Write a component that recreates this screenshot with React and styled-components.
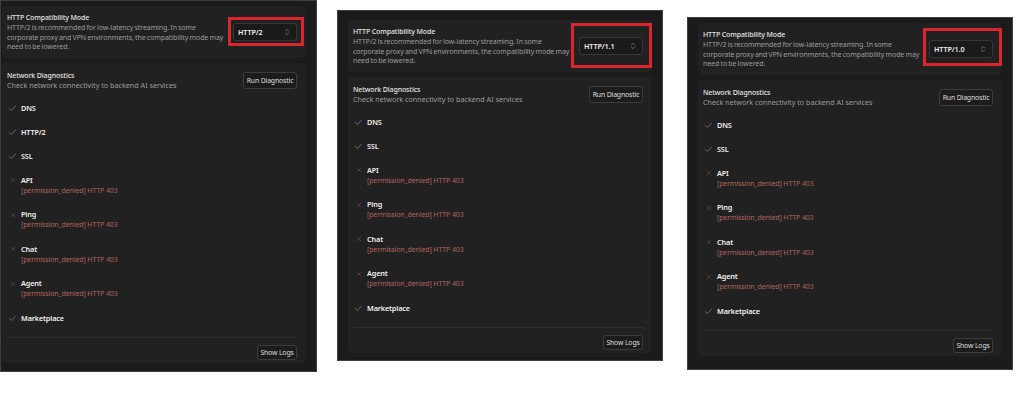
import styled, { createGlobalStyle } from "styled-components";
import { Check, X, ChevronsUpDown } from "lucide-react";

const GlobalStyle = createGlobalStyle`
  html, body {
    margin: 0;
    padding: 0;
    background: #ffffff;
  }
  body {
    font-family: "Noto Sans", "Open Sans", sans-serif;
    -webkit-font-smoothing: antialiased;
  }
`;

const ERR = "[permission_denied] HTTP 403";

const baseRows = [
  { name: "DNS", ok: true },
  { name: "SSL", ok: true },
  { name: "API", ok: false, err: ERR },
  { name: "Ping", ok: false, err: ERR },
  { name: "Chat", ok: false, err: ERR },
  { name: "Agent", ok: false, err: ERR },
  { name: "Marketplace", ok: true },
];

const withHttp2 = [baseRows[0], { name: "HTTP/2", ok: true }, ...baseRows.slice(1)];

const panels = [
  {
    value: "HTTP/2",
    rows: withHttp2,
    ml: 0,
    mt: 0,
    pl: 1,
    pt: 5,
    pb: 8,
    width: 317,
    mark: { t: 6, r: 7, b: 5, l: 5 },
  },
  {
    value: "HTTP/1.1",
    rows: baseRows,
    ml: 20,
    mt: 10,
    pl: 10,
    pt: 9,
    pb: 7,
    width: 326,
    mark: { t: 14, r: 9, b: 13, l: 8 },
  },
  {
    value: "HTTP/1.0",
    rows: baseRows,
    ml: 24,
    mt: 17,
    pl: 10,
    pt: 5,
    pb: 13,
    width: 326,
    mark: { t: 12, r: 9, b: 8, l: 6 },
  },
];

export default function App() {
  return (
    <>
      <GlobalStyle />
      <Page>
        {panels.map((p) => (
          <SettingsPanel key={p.value} {...p} />
        ))}
      </Page>
    </>
  );
}

function SettingsPanel({ value, rows, ml, mt, pl, pt, pb, width, mark }) {
  return (
    <Panel $ml={ml} $mt={mt} $pl={pl} $pt={pt} $pb={pb} $w={width}>
      <Card>
        <ModeRow>
          <ModeText>
            <Title>HTTP Compatibility Mode</Title>
            <ModeDesc>
              HTTP/2 is recommended for low-latency streaming. In some
              <br />
              corporate proxy and VPN environments, the compatibility mode may
              <br />
              need to be lowered.
            </ModeDesc>
          </ModeText>
          <SelectWrap>
            <Select>
              <span>{value}</span>
              <ChevronsUpDown size={8} strokeWidth={1.6} />
            </Select>
            <Mark $t={mark.t} $r={mark.r} $b={mark.b} $l={mark.l} />
          </SelectWrap>
        </ModeRow>
      </Card>

      <DiagCard>
        <DiagHeader>
          <div>
            <Title>Network Diagnostics</Title>
            <Desc>Check network connectivity to backend AI services</Desc>
          </div>
          <Button $w={54} $h={17}>Run Diagnostic</Button>
        </DiagHeader>

        <CheckList>
          {rows.map((r) => (
            <CheckRow key={r.name}>
              <IconBox $ok={r.ok}>
                {r.ok ? (
                  <Check size={9} strokeWidth={1.3} />
                ) : (
                  <X size={8} strokeWidth={1.2} />
                )}
              </IconBox>
              <div>
                <Label>{r.name}</Label>
                {r.err && <ErrText>{r.err}</ErrText>}
              </div>
            </CheckRow>
          ))}
        </CheckList>

        <Footer>
          <Button $w={40} $h={15}>Show Logs</Button>
        </Footer>
      </DiagCard>
    </Panel>
  );
}

const Page = styled.div`
  width: 1024px;
  height: 394px;
  display: flex;
  align-items: flex-start;
  overflow: hidden;
  background: #ffffff;
`;

const Panel = styled.div`
  box-sizing: border-box;
  flex: none;
  width: ${(p) => p.$w}px;
  margin-left: ${(p) => p.$ml}px;
  margin-top: ${(p) => p.$mt}px;
  padding: ${(p) => p.$pt}px 11px ${(p) => p.$pb}px ${(p) => p.$pl}px;
  background: #1b1b1b;
  border: 1px solid #3f3f3f;
  display: flex;
  flex-direction: column;
  gap: 5px;
`;

const Card = styled.div`
  background: #212121;
  border-radius: 4px;
  padding: 7px 8px 6px 5px;
`;

const DiagCard = styled(Card)`
  padding: 8px 8px 3px 5px;
`;

const ModeRow = styled.div`
  display: flex;
  align-items: center;
  justify-content: space-between;
  gap: 2px;
`;

const ModeText = styled.div`
  flex: 1;
  min-width: 0;
`;

const Title = styled.div`
  font-size: 7px;
  line-height: 10px;
  font-weight: 500;
  color: #e4e4e4;
  letter-spacing: -0.12px;
`;

const Desc = styled.div`
  font-size: 7.2px;
  line-height: 9.6px;
  color: #9c9c9c;
`;

const ModeDesc = styled(Desc)`
  font-size: 7px;
  letter-spacing: -0.08px;
  word-spacing: -0.5px;
  white-space: nowrap;
`;

const SelectWrap = styled.div`
  position: relative;
  flex: none;
`;

const Select = styled.div`
  box-sizing: border-box;
  width: 64px;
  height: 18px;
  display: flex;
  align-items: center;
  justify-content: space-between;
  padding: 0 5px 0 4px;
  background: #1a1a1a;
  border: 1px solid #363636;
  border-radius: 3px;
  font-size: 7.2px;
  font-weight: 600;
  color: #ececec;
  letter-spacing: -0.1px;
  svg {
    color: #a8a8a8;
  }
`;

const Mark = styled.div`
  position: absolute;
  top: -${(p) => p.$t}px;
  right: -${(p) => p.$r}px;
  bottom: -${(p) => p.$b}px;
  left: -${(p) => p.$l}px;
  border: 3px solid #d9252d;
  pointer-events: none;
`;

const DiagHeader = styled.div`
  display: flex;
  align-items: center;
  justify-content: space-between;
`;

const Button = styled.div`
  box-sizing: border-box;
  width: ${(p) => p.$w}px;
  height: ${(p) => p.$h}px;
  display: flex;
  align-items: center;
  justify-content: center;
  background: #1c1c1c;
  border: 1px solid #3c3c3c;
  border-radius: 3px;
  font-size: 6.9px;
  color: #dedede;
  white-space: nowrap;
  letter-spacing: -0.15px;
`;

const CheckList = styled.div`
  display: flex;
  flex-direction: column;
  gap: 13px;
  margin-top: 12.5px;
  padding-bottom: 13px;
  border-bottom: 1px solid #2e2e2e;
`;

const CheckRow = styled.div`
  display: flex;
  align-items: flex-start;
  gap: 4px;
  padding-left: 1px;
`;

const IconBox = styled.div`
  width: 9px;
  height: 11px;
  display: flex;
  align-items: center;
  justify-content: center;
  color: ${(p) => (p.$ok ? "#b4b4b4" : "#9a5c5c")};
`;

const Label = styled.div`
  font-size: 7.3px;
  line-height: 11px;
  font-weight: 600;
  color: #f0f0f0;
  letter-spacing: -0.15px;
`;

const ErrText = styled.div`
  font-size: 7px;
  line-height: 10.5px;
  color: #b0625f;
  letter-spacing: -0.12px;
`;

const Footer = styled.div`
  display: flex;
  justify-content: flex-end;
  padding-top: 7px;
`;
